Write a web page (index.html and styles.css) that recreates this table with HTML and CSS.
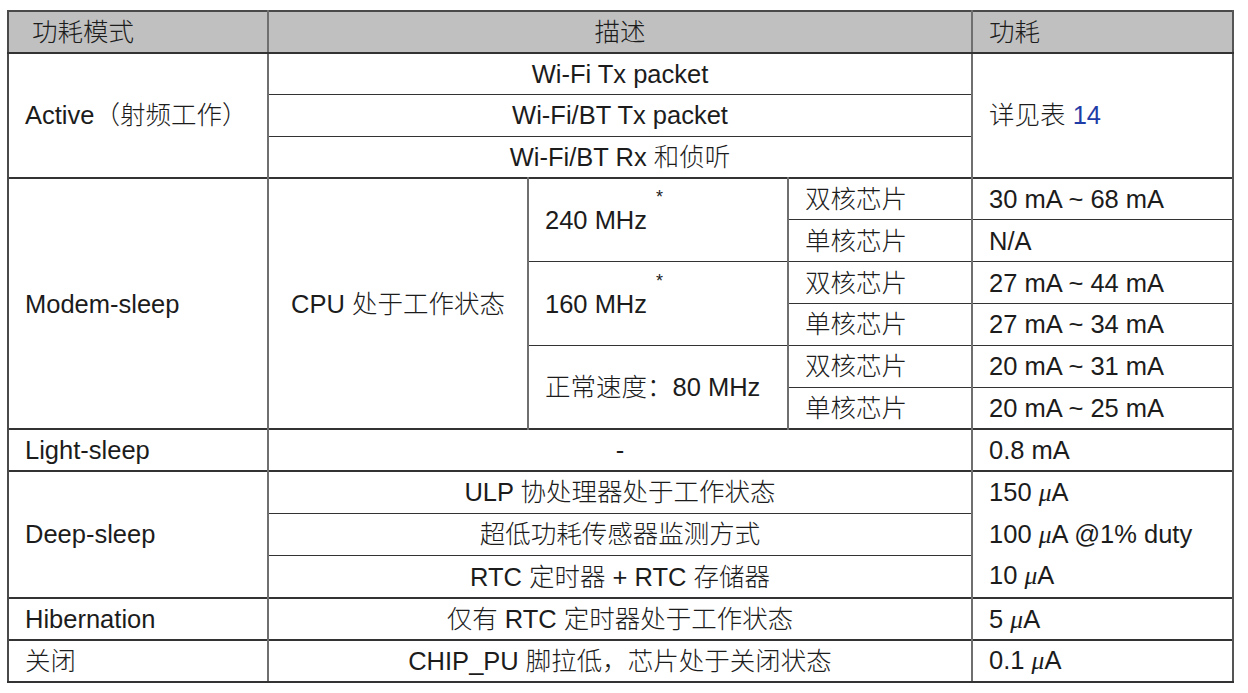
FILE: index.html
```html
<!DOCTYPE html>
<html lang="zh-CN">
<head>
<meta charset="utf-8">
<title>功耗模式</title>
<link rel="stylesheet" href="styles.css">
</head>
<body>
<div class="wrap">
<table class="power">
  <colgroup>
    <col class="c1"><col class="c2"><col class="c3"><col class="c4"><col class="c5">
  </colgroup>
  <thead>
    <tr class="head">
      <th class="first">功耗模式</th>
      <th colspan="3" class="center">描述</th>
      <th>功耗</th>
    </tr>
  </thead>
  <tbody>
    <tr class="g">
      <td rowspan="3">Active（射频工作）</td>
      <td colspan="3" class="center">Wi-Fi Tx packet</td>
      <td rowspan="3">详见表 <span class="ref">14</span></td>
    </tr>
    <tr><td colspan="3" class="center">Wi-Fi/BT Tx packet</td></tr>
    <tr><td colspan="3" class="center">Wi-Fi/BT Rx 和侦听</td></tr>

    <tr class="g">
      <td rowspan="6">Modem-sleep</td>
      <td rowspan="6" class="center">CPU 处于工作状态</td>
      <td rowspan="2">240 MHz<span class="star">*</span></td>
      <td>双核芯片</td>
      <td>30 mA ~ 68 mA</td>
    </tr>
    <tr><td>单核芯片</td><td>N/A</td></tr>
    <tr>
      <td rowspan="2">160 MHz<span class="star">*</span></td>
      <td>双核芯片</td>
      <td>27 mA ~ 44 mA</td>
    </tr>
    <tr><td>单核芯片</td><td>27 mA ~ 34 mA</td></tr>
    <tr>
      <td rowspan="2">正常速度：80 MHz</td>
      <td>双核芯片</td>
      <td>20 mA ~ 31 mA</td>
    </tr>
    <tr><td>单核芯片</td><td>20 mA ~ 25 mA</td></tr>

    <tr class="g">
      <td>Light-sleep</td>
      <td colspan="3" class="center">-</td>
      <td>0.8 mA</td>
    </tr>

    <tr class="g">
      <td rowspan="3">Deep-sleep</td>
      <td colspan="3" class="center">ULP 协处理器处于工作状态</td>
      <td rowspan="3" class="stack">
        <div class="line">150 <span class="mu">μ</span>A</div>
        <div class="line">100 <span class="mu">μ</span>A @1% duty</div>
        <div class="line">10 <span class="mu">μ</span>A</div>
      </td>
    </tr>
    <tr><td colspan="3" class="center">超低功耗传感器监测方式</td></tr>
    <tr><td colspan="3" class="center">RTC 定时器 + RTC 存储器</td></tr>

    <tr class="g">
      <td>Hibernation</td>
      <td colspan="3" class="center">仅有 RTC 定时器处于工作状态</td>
      <td>5 <span class="mu">μ</span>A</td>
    </tr>
    <tr class="g last">
      <td>关闭</td>
      <td colspan="3" class="center">CHIP_PU 脚拉低，芯片处于关闭状态</td>
      <td>0.1 <span class="mu">μ</span>A</td>
    </tr>
  </tbody>
</table>
</div>
</body>
</html>
```

FILE: styles.css
```css
html, body {
  margin: 0;
  padding: 0;
  background: #ffffff;
}

.wrap {
  padding: 10px 0 0 7px;
}

.power {
  border-collapse: collapse;
  table-layout: fixed;
  width: 1225px;
  font-family: "Liberation Sans", "Noto Sans CJK SC", sans-serif;
  font-size: 25.5px;
  font-weight: 300;
  color: #1c1c1c;
}

.c1 { width: 260px; }
.c2 { width: 260px; }
.c3 { width: 260px; }
.c4 { width: 184px; }
.c5 { width: 261px; }

.power tr {
  height: 41.8px;
}

.power th,
.power td {
  padding: 0 16px;
  text-align: left;
  vertical-align: middle;
  font-weight: 300;
  white-space: nowrap;
  line-height: 30px;
  border-left: 2px solid #6f6f6f;
  border-right: 2px solid #6f6f6f;
  border-top: 1px solid #333333;
  border-bottom: 1px solid #333333;
}

.power th {
  background: #c0c0c0;
  border-top: 2px solid #4a4a4a;
  border-bottom: 2px solid #333333;
}

.power th.first {
  padding-left: 23px;
}

.power tr.g > td {
  border-top: 2px solid #333333;
}

.power tr.last > td {
  border-bottom: 2px solid #333333;
}

.power tr > :first-child {
  border-left: 2px solid #4a4a4a;
}

.power tr > :last-child {
  border-right: 2px solid #555555;
}

.power .center {
  text-align: center;
}

.ref {
  color: #1f3ca6;
}

.star {
  display: inline-block;
  font-size: 18px;
  line-height: 0;
  margin-left: 9px;
  transform: translateY(-26px);
}

.mu {
  font-family: "Liberation Serif", serif;
  font-style: italic;
}

.stack {
  padding-top: 0;
  padding-bottom: 0;
}

.stack .line {
  height: 41.8px;
  line-height: 41.8px;
}
```
